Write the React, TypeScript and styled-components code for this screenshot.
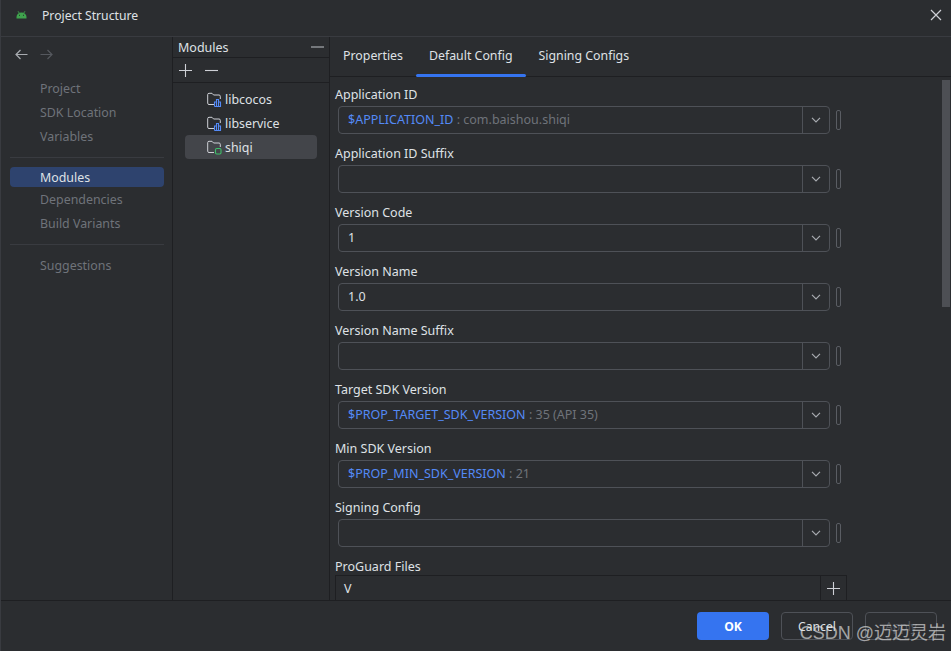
import React from "react";
import styled, { createGlobalStyle } from "styled-components";

const Global = createGlobalStyle`
  html, body { margin: 0; padding: 0; background: #2b2d30; }
  body { font-family: "Noto Sans", "Open Sans", sans-serif; font-size: 12.5px; color: #dfe1e5; }
  * { box-sizing: border-box; }
`;

const Window = styled.div`
  position: relative;
  width: 951px;
  height: 651px;
  display: flex;
  flex-direction: column;
  overflow: hidden;
  background: #2b2d30;
  border-left: 1px solid #393b40;
`;
const TitleBar = styled.header`
  height: 37px;
  flex: none;
  display: flex;
  align-items: center;
  padding: 0 9px 6px 15px;
  border-bottom: 1px solid #393b40;
`;
const Title = styled.span`
  margin-left: 15px;
  flex: 1;
  font-size: 12.2px;
  color: #dfe1e5;
`;
const Body = styled.div`
  flex: 1;
  min-height: 0;
  display: flex;
`;
const Sidebar = styled.nav`
  width: 172px;
  flex: none;
  padding: 9px 8px 0 9px;
  border-right: 1px solid #1e1f22;
`;
const NavArrows = styled.div`
  height: 16px;
  display: flex;
  gap: 12px;
  padding-left: 5px;
  margin-bottom: 15px;
  align-items: center;
`;
const NavItem = styled.div<{ $selected?: boolean }>`
  height: ${(p) => (p.$selected ? 20 : 24)}px;
  line-height: ${(p) => (p.$selected ? 21 : 24)}px;
  margin-bottom: ${(p) => (p.$selected ? 1 : 0)}px;
  padding-left: 30px;
  border-radius: 4px;
  font-size: 12.4px;
  color: ${(p) => (p.$selected ? "#dfe1e5" : "#6f737a")};
  background: ${(p) => (p.$selected ? "#2e436e" : "transparent")};
`;
const NavSep = styled.div`
  height: 1px;
  background: #393b40;
  margin: 8px 0 9px;
`;
const ModulesPane = styled.section`
  width: 157px;
  flex: none;
  display: flex;
  flex-direction: column;
  border-right: 1px solid #1e1f22;
`;
const PaneHeader = styled.div`
  height: 21px;
  flex: none;
  display: flex;
  align-items: center;
  justify-content: space-between;
  padding: 0 5px;
  font-size: 12.5px;
  color: #dfe1e5;
  border-bottom: 1px solid #1e1f22;
`;
const PaneTools = styled.div`
  height: 25px;
  flex: none;
  display: flex;
  align-items: center;
  gap: 13px;
  padding-left: 6px;
  border-bottom: 1px solid #1e1f22;
`;
const Tree = styled.div`
  padding: 4px 12px 0;
`;
const TreeRow = styled.div<{ $selected?: boolean }>`
  height: 24px;
  display: flex;
  align-items: center;
  gap: 3px;
  padding-left: 22px;
  border-radius: 4px;
  font-size: 12.4px;
  color: #dfe1e5;
  background: ${(p) => (p.$selected ? "#43454a" : "transparent")};
`;
const Main = styled.main`
  flex: 1;
  min-width: 0;
  display: flex;
  flex-direction: column;
`;
const Tabs = styled.div`
  height: 40px;
  flex: none;
  display: flex;
  border-bottom: 1px solid #1e1f22;
`;
const Tab = styled.div<{ $active?: boolean }>`
  position: relative;
  padding: 0 13px;
  line-height: 38px;
  font-size: 12.35px;
  color: #dfe1e5;
  &::after {
    content: "";
    display: ${(p) => (p.$active ? "block" : "none")};
    position: absolute;
    left: 0;
    right: 0;
    bottom: -1px;
    height: 3px;
    border-radius: 2px;
    background: #3574f0;
  }
`;
const Content = styled.div`
  position: relative;
  flex: 1;
  min-height: 0;
  overflow: hidden;
  padding: 9px 0 0 5px;
`;
const Field = styled.div`
  height: 59px;
`;
const Label = styled.div`
  height: 20px;
  line-height: 17px;
  font-size: 12.5px;
  color: #dfe1e5;
`;
const FieldRow = styled.div`
  display: flex;
  align-items: center;
  gap: 6px;
  margin-left: 3px;
`;
const Combo = styled.div`
  width: 492px;
  height: 28px;
  display: flex;
  border: 1px solid #4e5157;
  border-radius: 4px;
`;
const ComboValue = styled.div`
  flex: 1;
  padding-left: 9px;
  line-height: 25px;
  font-size: 12.5px;
  color: #dfe1e5;
  white-space: pre;
`;
const Ref = styled.span`
  color: #548af7;
`;
const Hint = styled.span`
  color: #6f737a;
`;
const ComboArrow = styled.div`
  width: 27px;
  display: flex;
  align-items: center;
  justify-content: center;
  border-left: 1px solid #4e5157;
`;
const Pill = styled.div`
  width: 5px;
  height: 20px;
  border: 1px solid #5a5d63;
  border-radius: 2px;
`;
const FileTable = styled.div`
  width: 512px;
  height: 30px;
  display: flex;
  border: 1px solid #1e1f22;
  margin-top: -3px;
`;
const FileCell = styled.div`
  flex: 1;
  padding-left: 8px;
  line-height: 25px;
  font-size: 12.5px;
  color: #dfe1e5;
`;
const AddCell = styled.div`
  width: 26px;
  height: 25px;
  display: flex;
  align-items: center;
  justify-content: center;
  border-left: 1px solid #1e1f22;
`;
const Scrollbar = styled.div`
  position: absolute;
  top: 3px;
  right: 1px;
  width: 8px;
  height: 227px;
  background: #4d4f54;
`;
const Footer = styled.footer`
  height: 51px;
  flex: none;
  display: flex;
  justify-content: flex-end;
  align-items: flex-start;
  gap: 12px;
  padding: 11px 14px 0 0;
  border-top: 1px solid #1e1f22;
`;
const Button = styled.button<{ $primary?: boolean; $disabled?: boolean }>`
  width: 72px;
  height: 28px;
  padding: 0;
  border-radius: 4px;
  font-family: inherit;
  font-size: 12.2px;
  font-weight: ${(p) => (p.$primary ? 700 : 400)};
  color: ${(p) => (p.$primary ? "#ffffff" : p.$disabled ? "#55585e" : "#dfe1e5")};
  background: ${(p) => (p.$primary ? "#3574f0" : "transparent")};
  border: ${(p) => (p.$primary ? "none" : "1px solid #4e5157")};
`;
const Watermark = styled.div`
  position: absolute;
  right: 5px;
  bottom: 7px;
  font-family: "Liberation Sans", "Noto Sans CJK SC", sans-serif;
  font-size: 18px;
  line-height: 22px;
  color: rgba(225, 225, 225, 0.68);
  white-space: pre;
`;

const Android = () => (
  <svg width="11" height="8" viewBox="0 0 11 8">
    <path d="M0.5 7.5V6a5 4.6 0 0 1 10 0v1.5z" fill="#3fa34d" />
    <path d="M2 0.2l1.3 2M9 0.2l-1.3 2" stroke="#3fa34d" strokeWidth="0.9" />
    <rect x="3" y="3.8" width="1" height="1" fill="#2b2d30" />
    <rect x="7" y="3.8" width="1" height="1" fill="#2b2d30" />
  </svg>
);
const Close = () => (
  <svg width="12" height="12" viewBox="0 0 12 12">
    <path d="M1 1l10 10M11 1L1 11" stroke="#ced0d6" strokeWidth="1.2" />
  </svg>
);
const Arrow = ({ flip, color }: { flip?: boolean; color: string }) => (
  <svg width="13" height="11" viewBox="0 0 13 11" style={flip ? { transform: "scaleX(-1)" } : undefined}>
    <path d="M12.5 5.5H1M5.5 1L1 5.5 5.5 10" fill="none" stroke={color} strokeWidth="1.2" />
  </svg>
);
const Plus = () => (
  <svg width="13" height="13" viewBox="0 0 13 13">
    <path d="M6.5 0v13M0 6.5h13" stroke="#ced0d6" strokeWidth="1.1" />
  </svg>
);
const Minus = () => (
  <svg width="13" height="13" viewBox="0 0 13 13">
    <path d="M0 6.5h13" stroke="#ced0d6" strokeWidth="1.1" />
  </svg>
);
const Chevron = () => (
  <svg width="10" height="6" viewBox="0 0 10 6">
    <path d="M1 .8l4 4 4-4" fill="none" stroke="#a8abb0" strokeWidth="1.2" />
  </svg>
);
const FolderIcon = ({ kind }: { kind: "lib" | "app" }) => (
  <svg width="15" height="15" viewBox="0 0 15 15">
    <path
      d="M7 12.5H2a1.3 1.3 0 0 1-1.3-1.3V2.6A1.3 1.3 0 0 1 2 1.3h3l1.6 1.7H12a1.3 1.3 0 0 1 1.3 1.3V7"
      fill="none"
      stroke="#ced0d6"
      strokeWidth="1"
    />
    {kind === "lib" ? (
      <path d="M7.5 14.5V10h2M9.5 14.5V7.5h2v7M11.5 10h2v4.5h-6" fill="none" stroke="#548af7" strokeWidth="1.1" />
    ) : (
      <rect x="8.5" y="8.5" width="5.5" height="5.5" rx="1.2" fill="none" stroke="#3fbf6a" strokeWidth="1.1" />
    )}
  </svg>
);

const fields: { label: string; ref?: string; value?: string; hint?: string }[] = [
  { label: "Application ID", ref: "$APPLICATION_ID", hint: " : com.baishou.shiqi" },
  { label: "Application ID Suffix" },
  { label: "Version Code", value: "1" },
  { label: "Version Name", value: "1.0" },
  { label: "Version Name Suffix" },
  { label: "Target SDK Version", ref: "$PROP_TARGET_SDK_VERSION", hint: " : 35 (API 35)" },
  { label: "Min SDK Version", ref: "$PROP_MIN_SDK_VERSION", hint: " : 21" },
  { label: "Signing Config" },
];

export default function App() {
  return (
    <Window>
      <Global />
      <TitleBar>
        <Android />
        <Title>Project Structure</Title>
        <Close />
      </TitleBar>
      <Body>
        <Sidebar>
          <NavArrows>
            <Arrow color="#a8abb0" />
            <Arrow flip color="#55585e" />
          </NavArrows>
          <NavItem>Project</NavItem>
          <NavItem>SDK Location</NavItem>
          <NavItem>Variables</NavItem>
          <NavSep />
          <NavItem $selected>Modules</NavItem>
          <NavItem>Dependencies</NavItem>
          <NavItem>Build Variants</NavItem>
          <NavSep />
          <NavItem>Suggestions</NavItem>
        </Sidebar>
        <ModulesPane>
          <PaneHeader>
            Modules
            <svg width="13" height="2" viewBox="0 0 13 2">
              <path d="M0 1h13" stroke="#a8abb0" strokeWidth="1.2" />
            </svg>
          </PaneHeader>
          <PaneTools>
            <Plus />
            <Minus />
          </PaneTools>
          <Tree>
            <TreeRow><FolderIcon kind="lib" />libcocos</TreeRow>
            <TreeRow><FolderIcon kind="lib" />libservice</TreeRow>
            <TreeRow $selected><FolderIcon kind="app" />shiqi</TreeRow>
          </Tree>
        </ModulesPane>
        <Main>
          <Tabs>
            <Tab>Properties</Tab>
            <Tab $active>Default Config</Tab>
            <Tab>Signing Configs</Tab>
          </Tabs>
          <Content>
            {fields.map((f) => (
              <Field key={f.label}>
                <Label>{f.label}</Label>
                <FieldRow>
                  <Combo>
                    <ComboValue>
                      {f.ref && <Ref>{f.ref}</Ref>}
                      {f.hint && <Hint>{f.hint}</Hint>}
                      {f.value}
                    </ComboValue>
                    <ComboArrow><Chevron /></ComboArrow>
                  </Combo>
                  <Pill />
                </FieldRow>
              </Field>
            ))}
            <Label>ProGuard Files</Label>
            <FileTable>
              <FileCell>V</FileCell>
              <AddCell><Plus /></AddCell>
            </FileTable>
            <Scrollbar />
          </Content>
        </Main>
      </Body>
      <Footer>
        <Button $primary>OK</Button>
        <Button>Cancel</Button>
        <Button $disabled>Apply</Button>
      </Footer>
      <Watermark>CSDN @迈迈灵岩</Watermark>
    </Window>
  );
}
